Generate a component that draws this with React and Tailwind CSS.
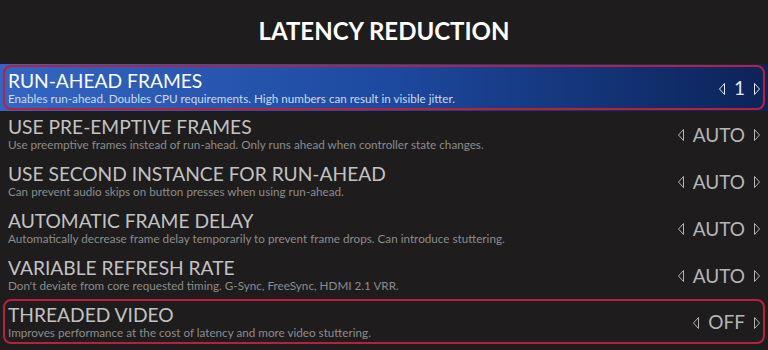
import React from "react";

const rows = [
  {
    title: "RUN-AHEAD FRAMES",
    desc: "Enables run-ahead. Doubles CPU requirements. High numbers can result in visible jitter.",
    value: "1",
    selected: true,
  },
  {
    title: "USE PRE-EMPTIVE FRAMES",
    desc: "Use preemptive frames instead of run-ahead. Only runs ahead when controller state changes.",
    value: "AUTO",
  },
  {
    title: "USE SECOND INSTANCE FOR RUN-AHEAD",
    desc: "Can prevent audio skips on button presses when using run-ahead.",
    value: "AUTO",
  },
  {
    title: "AUTOMATIC FRAME DELAY",
    desc: "Automatically decrease frame delay temporarily to prevent frame drops. Can introduce stuttering.",
    value: "AUTO",
  },
  {
    title: "VARIABLE REFRESH RATE",
    desc: "Don't deviate from core requested timing. G-Sync, FreeSync, HDMI 2.1 VRR.",
    value: "AUTO",
  },
  {
    title: "THREADED VIDEO",
    desc: "Improves performance at the cost of latency and more video stuttering.",
    value: "OFF",
    outlined: true,
  },
];

function Arrow({ dir }) {
  return (
    <svg width="8" height="14" viewBox="0 0 8 14" className="shrink-0">
      {dir === "left" ? (
        <polygon points="6.5,1.5 1.5,7 6.5,12.5" fill="none" stroke="currentColor" strokeWidth="1" strokeLinejoin="round" />
      ) : (
        <polygon points="1.5,1.5 6.5,7 1.5,12.5" fill="none" stroke="currentColor" strokeWidth="1" strokeLinejoin="round" />
      )}
    </svg>
  );
}

export default function App() {
  return (
    <div
      className="w-[768px] h-[350px] overflow-hidden bg-[#1e1c1d]"
      style={{ fontFamily: "Lato, 'Open Sans', sans-serif" }}
    >
      <div className="h-[64px] flex items-center justify-center pb-[2px]">
        <h1 className="text-[24px] font-bold text-white">LATENCY REDUCTION</h1>
      </div>

      <div className="flex flex-col">
        {rows.map((row, i) => (
          <div
            key={i}
            className={
              row.selected
                ? "h-[47px] px-[3px] py-[1px] bg-gradient-to-r from-[#3366c4] via-[#1d4aa0] to-[#0c2358]"
                : "h-[46.8px] px-[3px] py-[1px]"
            }
          >
            <div
              className={
                row.selected || row.outlined
                  ? "h-full rounded-lg border-2 border-[#b8203c] flex items-center pl-[3px] pr-[2px]"
                  : "h-full rounded-lg border-2 border-transparent flex items-center pl-[3px] pr-[2px]"
              }
            >
              <div className="flex-1 flex flex-col">
                <div
                  className={
                    row.selected
                      ? "text-[19.2px] leading-[21px] text-white"
                      : "text-[19.2px] leading-[21px] text-[#c2c2c2]"
                  }
                >
                  {row.title}
                </div>
                <div
                  className={
                    row.selected
                      ? "text-[11.7px] leading-[15px] text-[#cddaf0]"
                      : "text-[11.7px] leading-[15px] text-[#8c8c8c]"
                  }
                >
                  {row.desc}
                </div>
              </div>
              <div
                className={
                  row.selected
                    ? "flex items-center gap-[8px] text-[#e2e8f4] text-[19px] pt-[2px]"
                    : "flex items-center gap-[8px] text-[#b6b6b6] text-[19px] pt-[2px]"
                }
              >
                <Arrow dir="left" />
                <span>{row.value}</span>
                <Arrow dir="right" />
              </div>
            </div>
          </div>
        ))}
      </div>
    </div>
  );
}
